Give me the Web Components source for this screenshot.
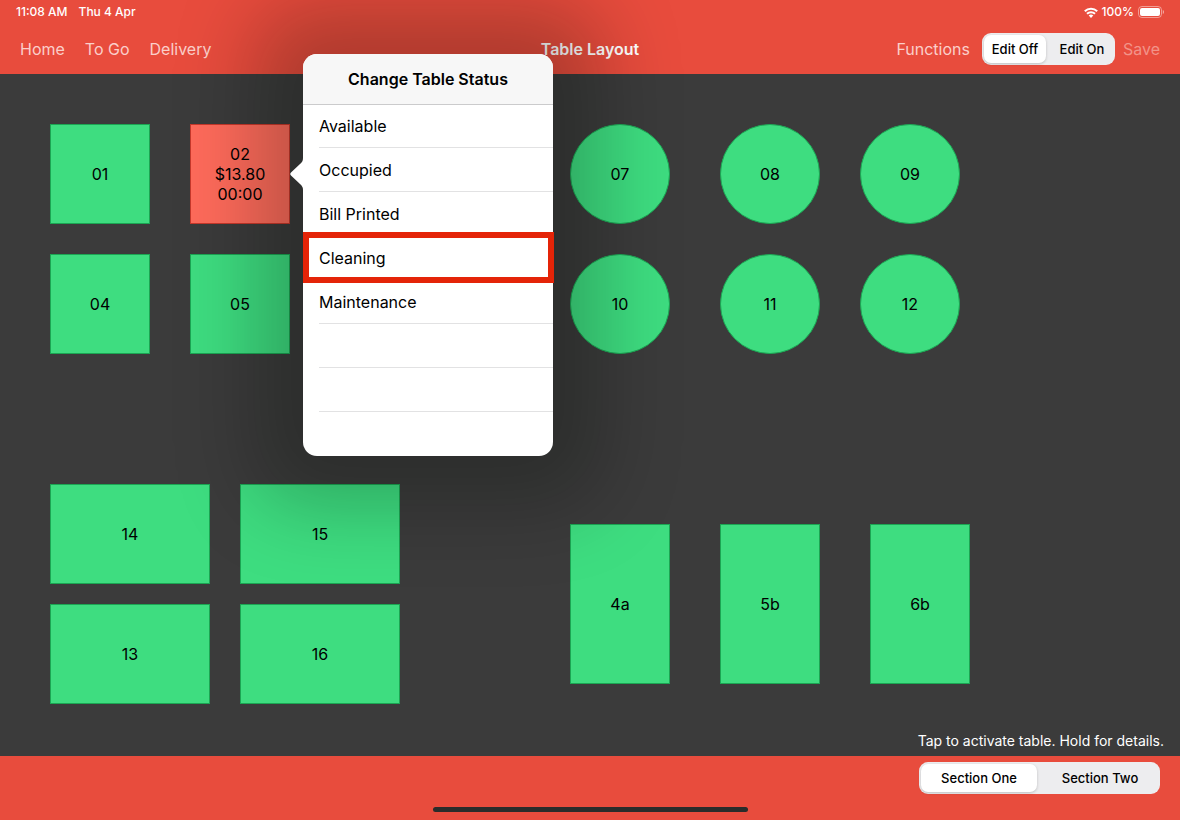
<!DOCTYPE html>
<html lang="en">
<head>
<meta charset="utf-8">
<meta name="viewport" content="width=device-width, initial-scale=1">
<title>Table Layout</title>
<style>
  html, body { height: 100%; }
  body {
    margin: 0;
    background: #3b3b3b;
    font-family: Inter, "Liberation Sans", sans-serif;
    font-size: 16px;
    line-height: 20px;
    color: #000;
  }
</style>
</head>
<body>
<pos-app></pos-app>

<template id="tpl-app">
  <style>
    :host { display: flex; flex-direction: column; min-height: 100vh; }
    header, footer { background: #e84c3d; }
    nav-bar { --link: #fbcfca; }
    footer {
      display: flex; flex-direction: column; align-items: center;
      justify-content: space-between; height: 64px; box-sizing: border-box;
      padding: 6px 20px 8px;
    }
    footer seg-control { align-self: flex-end; }
    .home { width: 315px; height: 5px; border-radius: 3px; background: #2a2c2b; }
    floor-plan { flex: 1; }
  </style>
  <header>
    <status-bar></status-bar>
    <nav-bar>
      <a slot="left" href="#home">Home</a>
      <a slot="left" href="#togo">To Go</a>
      <a slot="left" href="#delivery">Delivery</a>
      <span slot="title">Table Layout</span>
      <a slot="right" href="#functions">Functions</a>
      <seg-control slot="right" label="Edit mode" options="Edit Off,Edit On" segment="62"></seg-control>
      <button slot="right" disabled>Save</button>
    </nav-bar>
  </header>
  <floor-plan>
    <floor-table x="50" y="50">01</floor-table>
    <floor-table x="190" y="50" status="occupied">02<br>$13.80<br>00:00</floor-table>
    <floor-table x="50" y="180">04</floor-table>
    <floor-table x="190" y="180">05</floor-table>
    <floor-table x="570" y="50" shape="round">07</floor-table>
    <floor-table x="720" y="50" shape="round">08</floor-table>
    <floor-table x="860" y="50" shape="round">09</floor-table>
    <floor-table x="570" y="180" shape="round">10</floor-table>
    <floor-table x="720" y="180" shape="round">11</floor-table>
    <floor-table x="860" y="180" shape="round">12</floor-table>
    <floor-table x="50" y="410" w="160">14</floor-table>
    <floor-table x="240" y="410" w="160">15</floor-table>
    <floor-table x="50" y="530" w="160">13</floor-table>
    <floor-table x="240" y="530" w="160">16</floor-table>
    <floor-table x="570" y="450" h="160">4a</floor-table>
    <floor-table x="720" y="450" h="160">5b</floor-table>
    <floor-table x="870" y="450" h="160">6b</floor-table>
    <status-popover slot="overlay">
      <span slot="title">Change Table Status</span>
      <status-row>Available</status-row>
      <status-row>Occupied</status-row>
      <status-row>Bill Printed</status-row>
      <status-row marked>Cleaning</status-row>
      <status-row>Maintenance</status-row>
      <status-row empty></status-row>
      <status-row empty></status-row>
      <status-row empty></status-row>
    </status-popover>
    <span slot="hint">Tap to activate table. Hold for details.</span>
  </floor-plan>
  <footer>
    <seg-control label="Section" options="Section One,Section Two" segment="116"></seg-control>
    <div class="home"></div>
  </footer>
</template>

<template id="tpl-status">
  <style>
    :host {
      display: flex; justify-content: space-between; align-items: center;
      height: 24px; padding: 0 16px; color: #fff;
      font-size: 12px; line-height: 16px; font-weight: 500;
    }
    div { display: flex; align-items: center; gap: 11px; }
    .right { gap: 4px; }
    svg { display: block; }
  </style>
  <div><span>11:08 AM</span><span>Thu 4 Apr</span></div>
  <div class="right">
    <svg width="14" height="11" viewBox="0 0 14 11" fill="none" stroke="#fff" stroke-width="2">
      <path d="M.8 4.200a8.800 8.800 0 0 1 12.400 0"/>
      <path d="M3 6.800a5.700 5.700 0 0 1 8 0"/>
      <path d="M7 11 4.700 8.600a3.300 3.300 0 0 1 4.600 0z" fill="#fff" stroke="none"/>
    </svg>
    <span>100%</span>
    <svg width="26" height="12" viewBox="0 0 26 12">
      <rect x=".5" y=".5" width="23" height="11" rx="3.400" fill="none" stroke="#fff" stroke-opacity=".45"/>
      <rect x="2" y="2" width="20" height="8" rx="2" fill="#fff"/>
      <path d="M24.800 4c1.600.5 1.600 3.500 0 4z" fill="#fff" fill-opacity=".5"/>
    </svg>
  </div>
</template>

<template id="tpl-nav">
  <style>
    :host {
      display: grid; grid-template-columns: 1fr auto 1fr; align-items: center;
      height: 50px; padding: 0 20px; box-sizing: border-box;
    }
    div { display: flex; align-items: center; gap: 20px; }
    .right { justify-content: flex-end; gap: 12px; }
    .title { font-weight: 600; color: #fff; }
    ::slotted(a) { color: var(--link); text-decoration: none; }
    ::slotted(button) {
      border: 0; padding: 0; margin-left: -4px; background: none;
      font: inherit; color: #f29389;
    }
  </style>
  <div><slot name="left"></slot></div>
  <div class="title"><slot name="title"></slot></div>
  <div class="right"><slot name="right"></slot></div>
</template>

<template id="tpl-seg">
  <style>
    :host { display: block; }
    fieldset {
      display: flex; justify-content: space-between; gap: 5px; margin: 0; border: 0; padding: 2px; min-width: 0;
      border-radius: 9px; background: #ededef;
    }
    label { display: block; width: var(--segment); flex-grow: 1; }
    input {
      position: absolute; opacity: 0; margin: 0; width: 1px; height: 1px;
    }
    span {
      display: block; padding: 4px 0; border-radius: 7px; text-align: center;
      font-size: 13px; line-height: 20px; font-weight: 500;
    }
    input:checked + span {
      background: #fff;
      box-shadow: 0 1px 3px rgba(0, 0, 0, .2);
    }
  </style>
  <fieldset></fieldset>
</template>

<template id="tpl-floor">
  <style>
    :host {
      display: flex; flex-direction: column; justify-content: flex-end;
      position: relative; z-index: 1; min-height: 682px; background: #3b3b3b;
    }
    .hint {
      align-self: flex-end; padding: 0 16px 5px;
      color: #fff; font-size: 14px; line-height: 20px;
    }
    ::slotted(status-popover) { position: absolute; left: 303px; top: -20px; }
  </style>
  <slot></slot>
  <div class="hint"><slot name="hint"></slot></div>
  <slot name="overlay"></slot>
</template>

<template id="tpl-table">
  <style>
    :host { display: block; position: absolute; }
    button {
      display: block; box-sizing: border-box; width: 100%; height: 100%; padding: 0;
      border: 1px solid #1ba653; background: #3edd80; color: #000;
      font: inherit; text-align: center;
    }
    :host([shape="round"]) button { border-radius: 50%; }
    :host([status="occupied"]) button { background: #ff6b5b; border-color: #c7382b; }
  </style>
  <button><slot></slot></button>
</template>

<template id="tpl-popover">
  <style>
    :host { display: block; width: 250px; }
    section {
      position: relative; border-radius: 14px; background: #fff;
      box-shadow: 0 0 80px 48px rgba(0, 8, 0, .25);
    }
    svg { position: absolute; right: 100%; top: 104px; display: block; }
    h2 {
      margin: 0; height: 51px; box-sizing: border-box; padding: 15px 0;
      border-bottom: 1px solid #cbcbcc; border-radius: 14px 14px 0 0;
      background: #f7f7f7; text-align: center;
      font-size: 16px; line-height: 20px; font-weight: 600;
    }
    .rows { margin-top: -1px; }
  </style>
  <section>
    <svg width="13" height="32" viewBox="0 0 13 32"><path d="M13 0C13 3 12 4 10 6L1 14.500Q-.5 16 1 17.500L10 26C12 28 13 29 13 32z" fill="#fff"/></svg>
    <h2><slot name="title"></slot></h2>
    <div class="rows"><slot></slot></div>
  </section>
</template>

<template id="tpl-row">
  <style>
    :host { display: block; position: relative; height: 44px; padding-left: 16px; }
    button, .blank {
      display: block; width: 100%; height: 44px; box-sizing: border-box; padding: 0;
      border: 0; border-bottom: 1px solid #e2e2e3; background: none;
      font: inherit; color: #000; text-align: left;
    }
    :host(:last-of-type) .blank { border-bottom: 0; }
    :host([marked])::after {
      content: ""; position: absolute; inset: -4px -1px -3px 0; z-index: 1;
      border: 6px solid #e42408; pointer-events: none;
    }
  </style>
</template>

<script>
  const stamp = (host, id) => {
    const root = host.attachShadow({ mode: "open" });
    root.append(document.getElementById(id).content.cloneNode(true));
    return root;
  };

  const simple = (name, id) => customElements.define(name, class extends HTMLElement {
    constructor() { super(); stamp(this, id); }
  });

  simple("status-bar", "tpl-status");
  simple("nav-bar", "tpl-nav");
  simple("floor-plan", "tpl-floor");
  simple("status-popover", "tpl-popover");

  customElements.define("seg-control", class extends HTMLElement {
    connectedCallback() {
      if (this.shadowRoot) return;
      const set = stamp(this, "tpl-seg").querySelector("fieldset");
      set.setAttribute("aria-label", this.getAttribute("label"));
      set.style.setProperty("--segment", this.getAttribute("segment") + "px");
      this.getAttribute("options").split(",").forEach((text, i) => {
        const label = document.createElement("label");
        const input = document.createElement("input");
        const span = document.createElement("span");
        input.type = "radio";
        input.name = "choice";
        input.checked = i === 0;
        span.textContent = text;
        label.append(input, span);
        set.append(label);
      });
    }
  });

  customElements.define("floor-table", class extends HTMLElement {
    connectedCallback() {
      if (this.shadowRoot) return;
      stamp(this, "tpl-table");
      const px = (name, fallback) => (this.getAttribute(name) || fallback) + "px";
      this.style.left = px("x", 0);
      this.style.top = px("y", 0);
      this.style.width = px("w", 100);
      this.style.height = px("h", 100);
    }
  });

  customElements.define("status-row", class extends HTMLElement {
    connectedCallback() {
      if (this.shadowRoot) return;
      const root = stamp(this, "tpl-row");
      if (this.hasAttribute("empty")) {
        const blank = document.createElement("div");
        blank.className = "blank";
        root.append(blank);
      } else {
        const button = document.createElement("button");
        button.append(document.createElement("slot"));
        root.append(button);
      }
    }
  });

  simple("pos-app", "tpl-app");
</script>
</body>
</html>
